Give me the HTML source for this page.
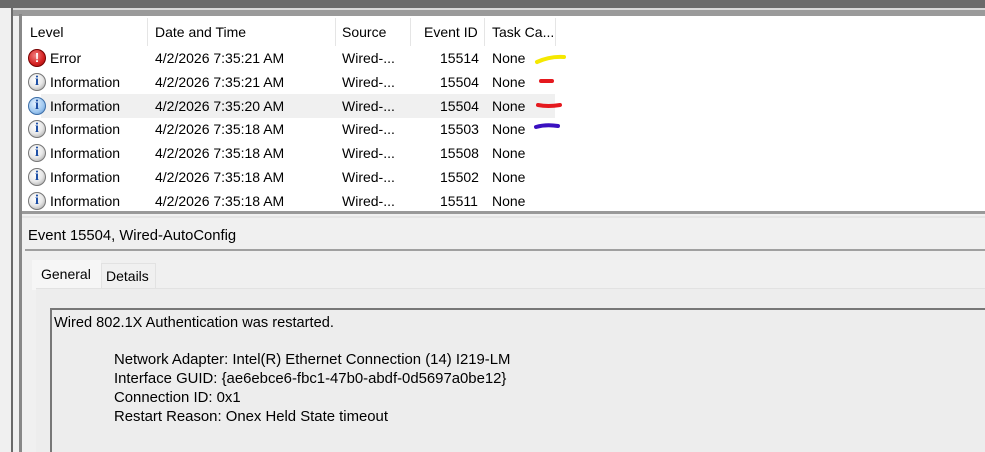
<!DOCTYPE html>
<html><head><meta charset="utf-8"><style>
*{margin:0;padding:0;box-sizing:border-box}
body{width:985px;height:452px;overflow:hidden;background:#f0f0f0;font-family:"Liberation Sans",sans-serif;font-size:14px;color:#000;position:relative}
.abs{position:absolute}
.t{position:absolute;white-space:nowrap}
.ic{position:absolute;left:28px;width:18px;height:18px;border-radius:50%}
.info{background:radial-gradient(circle at 40% 35%,#fff 0,#e8e8e8 50%,#9a9a9a 100%);border:1px solid #777}
.info::after{content:"i";position:absolute;left:0;right:0;top:0;text-align:center;font:bold 14px/16px "Liberation Serif",serif;color:#1d4fa6}
.info.sel{background:radial-gradient(circle at 40% 35%,#e6f2ff 0,#9cc6ef 60%,#4f86c6 100%);border:1px solid #3c6ea8}
.err{background:radial-gradient(circle at 40% 35%,#f08080 0,#d42020 60%,#8e0c0c 100%);border:1px solid #700}
.err::after{content:"!";position:absolute;left:0;right:0;top:0;text-align:center;font:bold 13px/16px "Liberation Sans",sans-serif;color:#fff}
.big{font-size:15px}
</style></head><body>
<div class="abs" style="left:0;top:0;width:985px;height:8px;background:#6a6a6a"></div>
<div class="abs" style="left:11px;top:8px;width:974px;height:8px;background:#9a9a9a;border-top:2px solid #d8d8d8"></div>
<div class="abs" style="left:11px;top:8px;width:2px;height:444px;background:#6a6a6a"></div>
<div class="abs" style="left:19px;top:14px;width:3px;height:438px;background:#888"></div>
<div class="abs" style="left:22px;top:16px;width:963px;height:195px;background:#fff"></div>
<div class="abs" style="left:22px;top:211px;width:963px;height:3px;background:#999"></div>
<div class="abs" style="left:147px;top:18px;width:1px;height:28px;background:#e5e5e5"></div>
<div class="abs" style="left:335px;top:18px;width:1px;height:28px;background:#e5e5e5"></div>
<div class="abs" style="left:410px;top:18px;width:1px;height:28px;background:#e5e5e5"></div>
<div class="abs" style="left:484px;top:18px;width:1px;height:28px;background:#e5e5e5"></div>
<div class="abs" style="left:555px;top:18px;width:1px;height:28px;background:#e5e5e5"></div>
<div class="t" style="left:30px;top:24px">Level</div>
<div class="t" style="left:155px;top:24px">Date and Time</div>
<div class="t" style="left:342px;top:24px">Source</div>
<div class="t" style="left:424px;top:24px">Event ID</div>
<div class="t" style="left:492px;top:24px">Task Ca...</div>
<div class="abs" style="left:41px;top:94px;width:514px;height:24px;background:#f0f0f0"></div>
<div class="ic err" style="top:49px"></div>
<div class="ic info" style="top:73px"></div>
<div class="ic info sel" style="top:97px"></div>
<div class="ic info" style="top:120px"></div>
<div class="ic info" style="top:144px"></div>
<div class="ic info" style="top:168px"></div>
<div class="ic info" style="top:192px"></div>
<div class="t" style="left:50px;top:50px">Error</div>
<div class="t" style="left:50px;top:74px">Information</div>
<div class="t" style="left:50px;top:98px">Information</div>
<div class="t" style="left:50px;top:121px">Information</div>
<div class="t" style="left:50px;top:145px">Information</div>
<div class="t" style="left:50px;top:169px">Information</div>
<div class="t" style="left:50px;top:193px">Information</div>
<div class="t" style="left:155px;top:50px">4/2/2026 7:35:21 AM</div>
<div class="t" style="left:155px;top:74px">4/2/2026 7:35:21 AM</div>
<div class="t" style="left:155px;top:98px">4/2/2026 7:35:20 AM</div>
<div class="t" style="left:155px;top:121px">4/2/2026 7:35:18 AM</div>
<div class="t" style="left:155px;top:145px">4/2/2026 7:35:18 AM</div>
<div class="t" style="left:155px;top:169px">4/2/2026 7:35:18 AM</div>
<div class="t" style="left:155px;top:193px">4/2/2026 7:35:18 AM</div>
<div class="t" style="left:342px;top:50px">Wired-...</div>
<div class="t" style="left:342px;top:74px">Wired-...</div>
<div class="t" style="left:342px;top:98px">Wired-...</div>
<div class="t" style="left:342px;top:121px">Wired-...</div>
<div class="t" style="left:342px;top:145px">Wired-...</div>
<div class="t" style="left:342px;top:169px">Wired-...</div>
<div class="t" style="left:342px;top:193px">Wired-...</div>
<div class="t" style="left:440px;top:50px">15514</div>
<div class="t" style="left:440px;top:74px">15504</div>
<div class="t" style="left:440px;top:98px">15504</div>
<div class="t" style="left:440px;top:121px">15503</div>
<div class="t" style="left:440px;top:145px">15508</div>
<div class="t" style="left:440px;top:169px">15502</div>
<div class="t" style="left:440px;top:193px">15511</div>
<div class="t" style="left:492px;top:50px">None</div>
<div class="t" style="left:492px;top:74px">None</div>
<div class="t" style="left:492px;top:98px">None</div>
<div class="t" style="left:492px;top:121px">None</div>
<div class="t" style="left:492px;top:145px">None</div>
<div class="t" style="left:492px;top:169px">None</div>
<div class="t" style="left:492px;top:193px">None</div>
<svg class="abs" style="left:530px;top:50px" width="40" height="85">
<path d="M7 12 Q20 6 34 7" stroke="#f5e800" stroke-width="4" fill="none" stroke-linecap="round"/>
<path d="M11 31 L22 31" stroke="#e5191e" stroke-width="4" stroke-linecap="round"/>
<path d="M8 55 Q18 57 30 55" stroke="#e5191e" stroke-width="4" fill="none" stroke-linecap="round"/>
<path d="M6 77 Q16 74 28 76" stroke="#3a10c0" stroke-width="4" fill="none" stroke-linecap="round"/>
</svg>
<div class="abs" style="left:22px;top:216px;width:963px;height:2px;background:#e4e4e4"></div>
<div class="t" style="left:28px;top:228px;font-size:14.8px">Event 15504, Wired-AutoConfig</div>
<div class="abs" style="left:25px;top:249px;width:960px;height:2px;background:#a0a0a0"></div>
<div class="abs" style="left:32px;top:260px;width:69px;height:30px;background:#f6f6f6"></div>
<div class="t" style="left:41px;top:266px">General</div>
<div class="abs" style="left:101px;top:263px;width:55px;height:25px;border:1px solid #e2e2e2;border-bottom:none"></div>
<div class="t" style="left:106px;top:268px">Details</div>
<div class="abs" style="left:36px;top:288px;width:949px;height:164px;background:#ededed;border-top:1px solid #e2e2e2"></div>
<div class="abs" style="left:50px;top:308px;width:935px;height:144px;border-left:2px solid #777;border-top:2px solid #777"></div>
<div class="t big" style="left:54px;top:315px;font-size:14.6px">Wired 802.1X Authentication was restarted.</div>
<div class="t big" style="left:114px;top:351px;line-height:19px;font-size:14.9px">Network Adapter: Intel(R) Ethernet Connection (14) I219-LM<br>Interface GUID: {ae6ebce6-fbc1-47b0-abdf-0d5697a0be12}<br>Connection ID: 0x1<br>Restart Reason: Onex Held State timeout</div>
</body></html>
